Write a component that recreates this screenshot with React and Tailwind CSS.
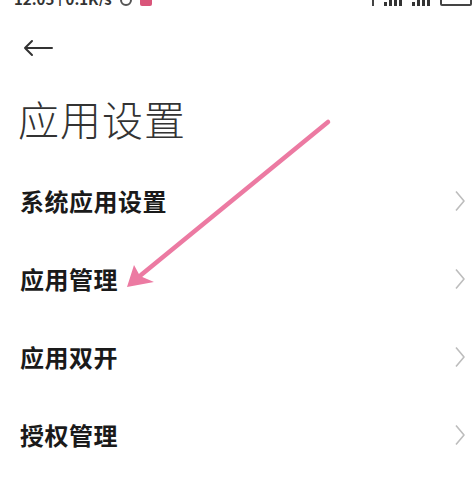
import React from 'react';

const rows = ['系统应用设置', '应用管理', '应用双开', '授权管理'];

function Chevron() {
    return (
        <svg width="12" height="22" viewBox="0 0 12 22" fill="none" className="shrink-0">
            <path d="M2 1.5 L10 11 L2 20.5" stroke="#bdbdbd" strokeWidth="1.6" strokeLinejoin="round" />
        </svg>
    );
}

function Signal() {
    return (
        <span className="flex items-end gap-[2px]">
            <span className="w-[3px] h-[4px] bg-[#333]" />
            <span className="w-[3px] h-[6px] bg-[#333]" />
            <span className="w-[3px] h-[8px] bg-[#333]" />
            <span className="w-[3px] h-[10px] bg-[#333]" />
        </span>
    );
}

export default function App() {
    return (
        <div
            className="relative w-[472px] h-[492px] bg-white overflow-hidden text-[#222]"
            style={{ fontFamily: '"Noto Sans CJK SC", "Noto Sans", sans-serif' }}
        >
            {/* status bar, mostly cropped off the top */}
            <div className="h-[6px] overflow-hidden relative">
                <div className="absolute left-[14px] bottom-0 flex items-end gap-[8px] text-[15px] leading-[15px] font-bold text-[#333]">
                    <span>12:05 | 0.1K/s</span>
                    <span className="w-[12px] h-[12px] rounded-full border-2 border-[#555]" />
                    <span className="w-[12px] h-[12px] rounded-[2px] bg-[#d9557a]" />
                </div>
                <div className="absolute right-0 bottom-0 flex items-end gap-[10px]">
                    <span className="w-[6px] h-[10px] border-r-2 border-[#444]" />
                    <Signal />
                    <Signal />
                    <span className="w-[32px] h-[12px] border-2 border-[#444] rounded-[2px]" />
                </div>
            </div>

            {/* back arrow */}
            <div className="pl-[22px] pt-[33px] h-[88px]">
                <svg width="32" height="18" viewBox="0 0 32 18" fill="none">
                    <path d="M30 9 H3 M10 2 L3 9 L10 16" stroke="#333" strokeWidth="2" strokeLinecap="round" strokeLinejoin="round" />
                </svg>
            </div>

            <h1 className="pl-[18px] text-[41px] leading-[48px] font-light text-[#333] tracking-[1px]">应用设置</h1>

            <div className="mt-[20px]">
                {rows.map((label) => (
                    <div key={label} className="flex items-center justify-between h-[78px] pl-[20px] pr-[6px]">
                        <span className="text-[24px] font-bold tracking-[0.5px] text-[#1a1a1a]">{label}</span>
                        <Chevron />
                    </div>
                ))}
            </div>

            {/* pink annotation arrow */}
            <svg className="absolute left-0 top-0 pointer-events-none" width="472" height="492" viewBox="0 0 472 492">
                <line x1="328" y1="122" x2="141" y2="275" stroke="#ec7aa2" strokeWidth="4.5" strokeLinecap="round" />
                <path d="M127 287 L134 265 L140 276 L154 282 Z" fill="#ec7aa2" />
            </svg>
        </div>
    );
}
